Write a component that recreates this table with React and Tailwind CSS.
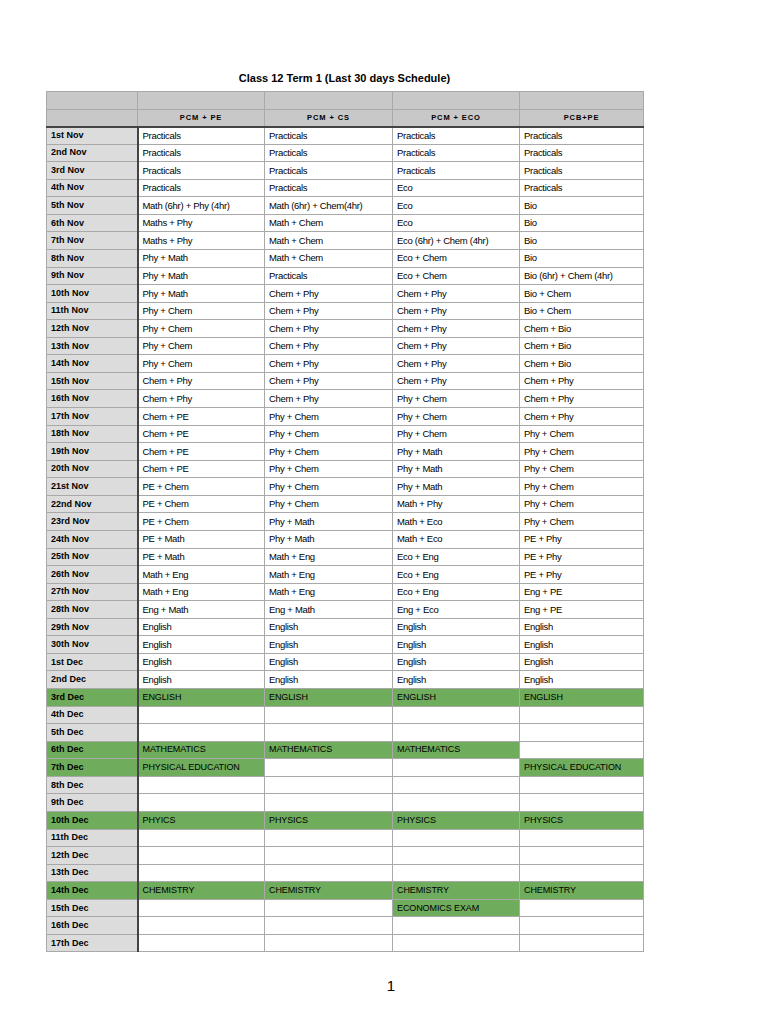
// App.jsx
const cols = ["PCM + PE", "PCM + CS", "PCM + ECO", "PCB+PE"];

const P = "Practicals";
const E = "English";

const rows = [
  ["1st Nov", [P, P, P, P]],
  ["2nd Nov", [P, P, P, P]],
  ["3rd Nov", [P, P, P, P]],
  ["4th Nov", [P, P, "Eco", P]],
  ["5th Nov", ["Math (6hr) + Phy (4hr)", "Math (6hr) + Chem(4hr)", "Eco", "Bio"]],
  ["6th Nov", ["Maths + Phy", "Math + Chem", "Eco", "Bio"]],
  ["7th Nov", ["Maths + Phy", "Math + Chem", "Eco (6hr) + Chem (4hr)", "Bio"]],
  ["8th Nov", ["Phy + Math", "Math + Chem", "Eco + Chem", "Bio"]],
  ["9th Nov", ["Phy + Math", P, "Eco + Chem", "Bio (6hr) + Chem (4hr)"]],
  ["10th Nov", ["Phy + Math", "Chem + Phy", "Chem + Phy", "Bio + Chem"]],
  ["11th Nov", ["Phy + Chem", "Chem + Phy", "Chem + Phy", "Bio + Chem"]],
  ["12th Nov", ["Phy + Chem", "Chem + Phy", "Chem + Phy", "Chem + Bio"]],
  ["13th Nov", ["Phy + Chem", "Chem + Phy", "Chem + Phy", "Chem + Bio"]],
  ["14th Nov", ["Phy + Chem", "Chem + Phy", "Chem + Phy", "Chem + Bio"]],
  ["15th Nov", ["Chem + Phy", "Chem + Phy", "Chem + Phy", "Chem + Phy"]],
  ["16th Nov", ["Chem + Phy", "Chem + Phy", "Phy + Chem", "Chem + Phy"]],
  ["17th Nov", ["Chem + PE", "Phy + Chem", "Phy + Chem", "Chem + Phy"]],
  ["18th Nov", ["Chem + PE", "Phy + Chem", "Phy + Chem", "Phy + Chem"]],
  ["19th Nov", ["Chem + PE", "Phy + Chem", "Phy + Math", "Phy + Chem"]],
  ["20th Nov", ["Chem + PE", "Phy + Chem", "Phy + Math", "Phy + Chem"]],
  ["21st Nov", ["PE + Chem", "Phy + Chem", "Phy + Math", "Phy + Chem"]],
  ["22nd Nov", ["PE + Chem", "Phy + Chem", "Math + Phy", "Phy + Chem"]],
  ["23rd Nov", ["PE + Chem", "Phy + Math", "Math + Eco", "Phy + Chem"]],
  ["24th Nov", ["PE + Math", "Phy + Math", "Math + Eco", "PE + Phy"]],
  ["25th Nov", ["PE + Math", "Math + Eng", "Eco + Eng", "PE + Phy"]],
  ["26th Nov", ["Math + Eng", "Math + Eng", "Eco + Eng", "PE + Phy"]],
  ["27th Nov", ["Math + Eng", "Math + Eng", "Eco + Eng", "Eng + PE"]],
  ["28th Nov", ["Eng + Math", "Eng + Math", "Eng + Eco", "Eng + PE"]],
  ["29th Nov", [E, E, E, E]],
  ["30th Nov", [E, E, E, E]],
  ["1st Dec", [E, E, E, E]],
  ["2nd Dec", [E, E, E, E]],
  ["3rd Dec", ["ENGLISH", "ENGLISH", "ENGLISH", "ENGLISH"], true],
  ["4th Dec", ["", "", "", ""]],
  ["5th Dec", ["", "", "", ""]],
  ["6th Dec", ["MATHEMATICS", "MATHEMATICS", "MATHEMATICS", ""], true],
  ["7th Dec", ["PHYSICAL EDUCATION", "", "", "PHYSICAL EDUCATION"], true],
  ["8th Dec", ["", "", "", ""]],
  ["9th Dec", ["", "", "", ""]],
  ["10th Dec", ["PHYICS", "PHYSICS", "PHYSICS", "PHYSICS"], true],
  ["11th Dec", ["", "", "", ""]],
  ["12th Dec", ["", "", "", ""]],
  ["13th Dec", ["", "", "", ""]],
  ["14th Dec", ["CHEMISTRY", "CHEMISTRY", "CHEMISTRY", "CHEMISTRY"], true],
  ["15th Dec", ["", "", "ECONOMICS EXAM", ""]],
  ["16th Dec", ["", "", "", ""]],
  ["17th Dec", ["", "", "", ""]],
];

const widths = ["w-[91px]", "w-[127px]", "w-[128px]", "w-[127px]", "w-[124px]"];

// exam cells are written in capitals and get the green fill
const isExam = (c) => c !== "" && c === c.toUpperCase();

const App = () => {
  return (
    <div
      className="w-[768px] h-[1024px] bg-white text-black"
      style={{ fontFamily: '"Liberation Sans", Arial, sans-serif' }}
    >
      <div className="pt-[71px] pl-[46px]">
        <h1 className="w-[597px] text-center text-[11px] font-bold leading-[14px] h-[20px]">
          Class 12 Term 1 (Last 30 days Schedule)
        </h1>
        <table className="border-collapse table-fixed w-[597px]">
          <colgroup>
            {widths.map((w, i) => (
              <col key={i} className={w} />
            ))}
          </colgroup>
          <thead>
            <tr className="h-[18px] bg-[#c8c8c8]">
              {widths.map((_, i) => (
                <th key={i} className="border border-[#a9a9a9] p-0" />
              ))}
            </tr>
            <tr className="h-[17px] bg-[#c8c8c8]">
              <th className="border border-[#a9a9a9] border-b-2 border-b-[#444] p-0" />
              {cols.map((c) => (
                <th
                  key={c}
                  className="border border-[#a9a9a9] border-b-2 border-b-[#444] p-0 text-[7.5px] font-semibold tracking-[0.9px] text-center leading-none"
                >
                  {c}
                </th>
              ))}
            </tr>
          </thead>
          <tbody>
            {rows.map(([date, cells, green]) => (
              <tr key={date} className="h-[17.57px]">
                <td
                  className={`border border-[#a9a9a9] border-r-2 border-r-[#444] px-[4px] py-0 text-[9px] font-semibold leading-none whitespace-nowrap ${
                    green ? "bg-[#6fac5c]" : "bg-[#dcdcdc]"
                  }`}
                >
                  {date}
                </td>
                {cells.map((c, i) => (
                  <td
                    key={i}
                    className={`border border-[#a9a9a9] px-[4px] py-0 leading-none whitespace-nowrap ${
                      isExam(c)
                        ? "bg-[#6fac5c] text-[9px] tracking-[-0.1px]"
                        : "bg-white text-[9.5px] tracking-[-0.3px]"
                    }`}
                  >
                    {c}
                  </td>
                ))}
              </tr>
            ))}
          </tbody>
        </table>
      </div>
      <div className="mt-[26px] text-center text-[15px] leading-none pl-[14px]">1</div>
    </div>
  );
};

export default App;
